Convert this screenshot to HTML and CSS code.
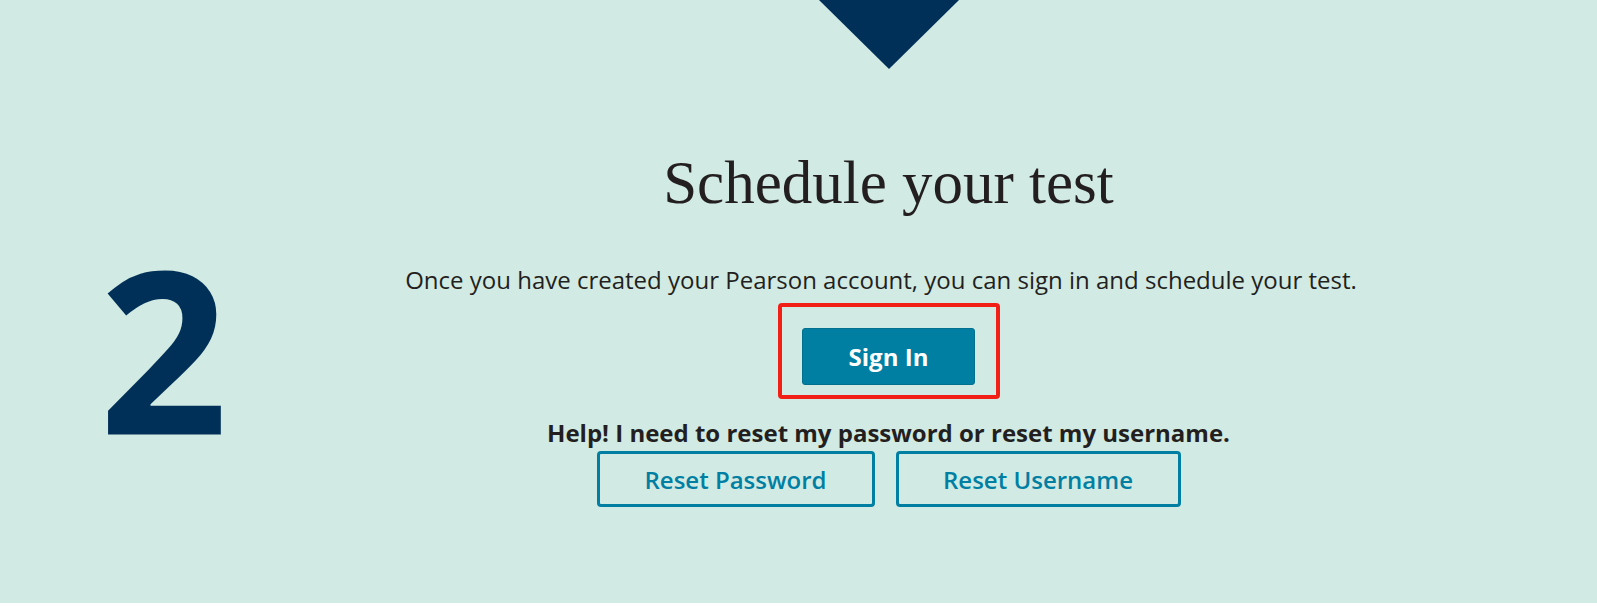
FILE: index.html
```html
<!DOCTYPE html>
<html lang="en">
<head>
<meta charset="utf-8">
<title>Schedule your test</title>
<link rel="stylesheet" href="styles.css">
</head>
<body>
<section class="step">
  <div class="step-num">2</div>
  <div class="step-body">
    <div class="arrow-down"></div>
    <h2 class="step-title">Schedule your test</h2>
    <p class="step-text">Once you have created your Pearson account, you can sign in and schedule your test.</p>
    <div class="signin-wrap">
      <a class="btn-primary" href="#">Sign In</a>
    </div>
    <p class="help-text">Help! I need to reset my password or reset my username.</p>
    <div class="reset-row">
      <a class="btn-outline btn-pass" href="#">Reset Password</a>
      <a class="btn-outline btn-user" href="#">Reset Username</a>
    </div>
  </div>
</section>
</body>
</html>
```
FILE: styles.css
```css
html, body {
  margin: 0;
  padding: 0;
  background: #ffffff;
  overflow: hidden;
}

.step {
  position: relative;
  display: grid;
  grid-template-columns: 180px 1fr;
  height: 603px;
  background: #d1eae3;
  font-family: "Open Sans", "Liberation Sans", sans-serif;
  color: #231f20;
}

.step::after {
  content: "";
  position: absolute;
  top: 100%;
  left: 814px;
  width: 142px;
  border-left: 3px solid transparent;
  border-right: 3px solid transparent;
  border-top: 3px solid #d1eae3;
}

.step-num {
  margin-top: 234px;
  padding-left: 99px;
  font-size: 226px;
  font-weight: 700;
  line-height: 1;
  color: #003057;
  white-space: nowrap;
  align-self: start;
}

.step-body {
  display: flex;
  flex-direction: column;
  align-items: center;
}

.arrow-down {
  width: 0;
  height: 0;
  border-left: 70px solid transparent;
  border-right: 70px solid transparent;
  border-top: 69px solid #003057;
}

.step-title {
  margin: 78px 0 0;
  font-family: "Liberation Serif", "Times New Roman", serif;
  font-weight: 400;
  font-size: 61px;
  line-height: 72px;
  color: #231f20;
}

.step-text {
  margin: 45px 0 0;
  padding-right: 15px;
  font-size: 24px;
  line-height: 32px;
}

.signin-wrap {
  position: relative;
  margin-top: 32px;
}

.signin-wrap::before {
  content: "";
  position: absolute;
  left: -24px;
  right: -25px;
  top: -25px;
  bottom: -14px;
  border: 4px solid #f21f17;
  border-radius: 4px;
}

.btn-primary {
  display: flex;
  align-items: center;
  justify-content: center;
  width: 173px;
  height: 57px;
  box-sizing: border-box;
  background: #007fa3;
  border: 1px solid #00708f;
  border-radius: 3px;
  color: #ffffff;
  font-size: 24px;
  font-weight: 700;
  text-decoration: none;
}

.help-text {
  margin: 32px 0 0;
  font-size: 24px;
  line-height: 32px;
  font-weight: 700;
}

.reset-row {
  display: flex;
  gap: 21px;
  margin-top: 2px;
}

.btn-outline {
  display: flex;
  align-items: center;
  justify-content: center;
  height: 56px;
  box-sizing: border-box;
  border: 3px solid #007fa3;
  border-radius: 4px;
  color: #007fa3;
  font-size: 24px;
  font-weight: 550;
  text-decoration: none;
}

.btn-pass {
  width: 278px;
}

.btn-user {
  width: 285px;
}
```
